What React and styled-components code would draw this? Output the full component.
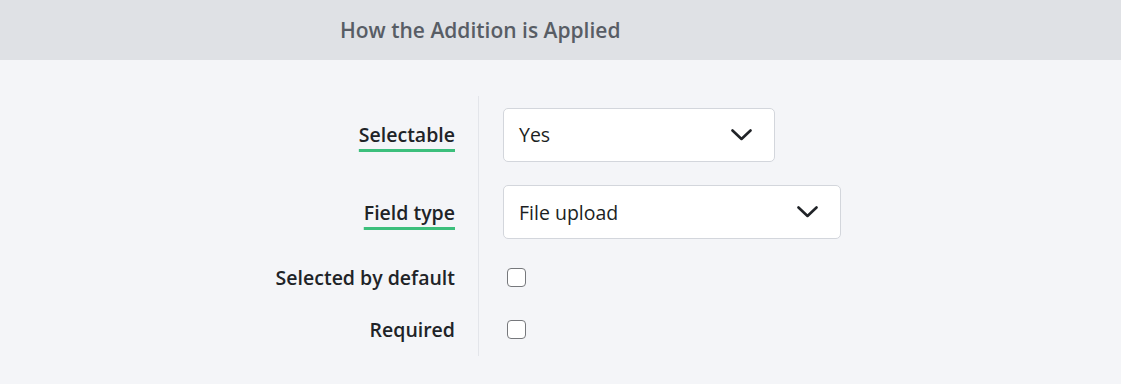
import React from "react";
import styled, { createGlobalStyle } from "styled-components";

const GlobalStyle = createGlobalStyle`
  html, body {
    margin: 0;
    padding: 0;
    background: #f4f5f8;
    font-family: "Open Sans", "Noto Sans", sans-serif;
  }
`;

const Page = styled.div`
  width: 1121px;
  height: 384px;
  background: #f4f5f8;
  overflow: hidden;
`;

const Header = styled.div`
  height: 60px;
  display: flex;
  align-items: center;
  padding-left: 340px;
  background: #dfe1e5;
  color: #585d65;
  font-size: 21px;
  font-weight: 600;
`;

const Form = styled.div`
  display: grid;
  grid-template-columns: 478px 1fr;
  grid-template-rows: 77px 78px 52px 53px;
  padding-top: 36px;
`;

const LabelCell = styled.div`
  display: flex;
  align-items: center;
  justify-content: flex-end;
  padding-right: 23px;
`;

const Label = styled.span`
  font-size: 19.5px;
  font-weight: 600;
  color: #202327;
  text-decoration: ${(p) => (p.marked ? "underline" : "none")};
  text-decoration-color: #3cbf7c;
  text-decoration-thickness: 3px;
  text-underline-offset: 7px;
  text-decoration-skip-ink: none;
`;

const ControlCell = styled.div`
  display: flex;
  align-items: center;
  border-left: 1px solid #e3e5ea;
  padding-left: 24px;
`;

const Select = styled.div`
  box-sizing: border-box;
  width: ${(p) => p.width}px;
  height: 54px;
  display: flex;
  align-items: center;
  justify-content: space-between;
  padding: 0 22px 0 15px;
  background: #fff;
  border: 1px solid #d3d6dc;
  border-radius: 5px;
  font-size: 19.5px;
  color: #1c1f23;
`;

const Checkbox = styled.div`
  box-sizing: border-box;
  width: 19px;
  height: 19px;
  margin-left: 4px;
  background: #fff;
  border: 1.5px solid #76787c;
  border-radius: 4px;
`;

const Chevron = () => (
  <svg width="21" height="12" viewBox="0 0 21 12">
    <path
      d="M1.5 1.5 L10.5 10 L19.5 1.5"
      fill="none"
      stroke="#202327"
      strokeWidth="2.6"
      strokeLinecap="round"
      strokeLinejoin="round"
    />
  </svg>
);

export default function App() {
  return (
    <Page>
      <GlobalStyle />
      <Header>How the Addition is Applied</Header>
      <Form>
        <LabelCell>
          <Label marked>Selectable</Label>
        </LabelCell>
        <ControlCell>
          <Select width={272}>
            Yes
            <Chevron />
          </Select>
        </ControlCell>

        <LabelCell>
          <Label marked>Field type</Label>
        </LabelCell>
        <ControlCell>
          <Select width={338}>
            File upload
            <Chevron />
          </Select>
        </ControlCell>

        <LabelCell>
          <Label>Selected by default</Label>
        </LabelCell>
        <ControlCell>
          <Checkbox />
        </ControlCell>

        <LabelCell>
          <Label>Required</Label>
        </LabelCell>
        <ControlCell>
          <Checkbox />
        </ControlCell>
      </Form>
    </Page>
  );
}
